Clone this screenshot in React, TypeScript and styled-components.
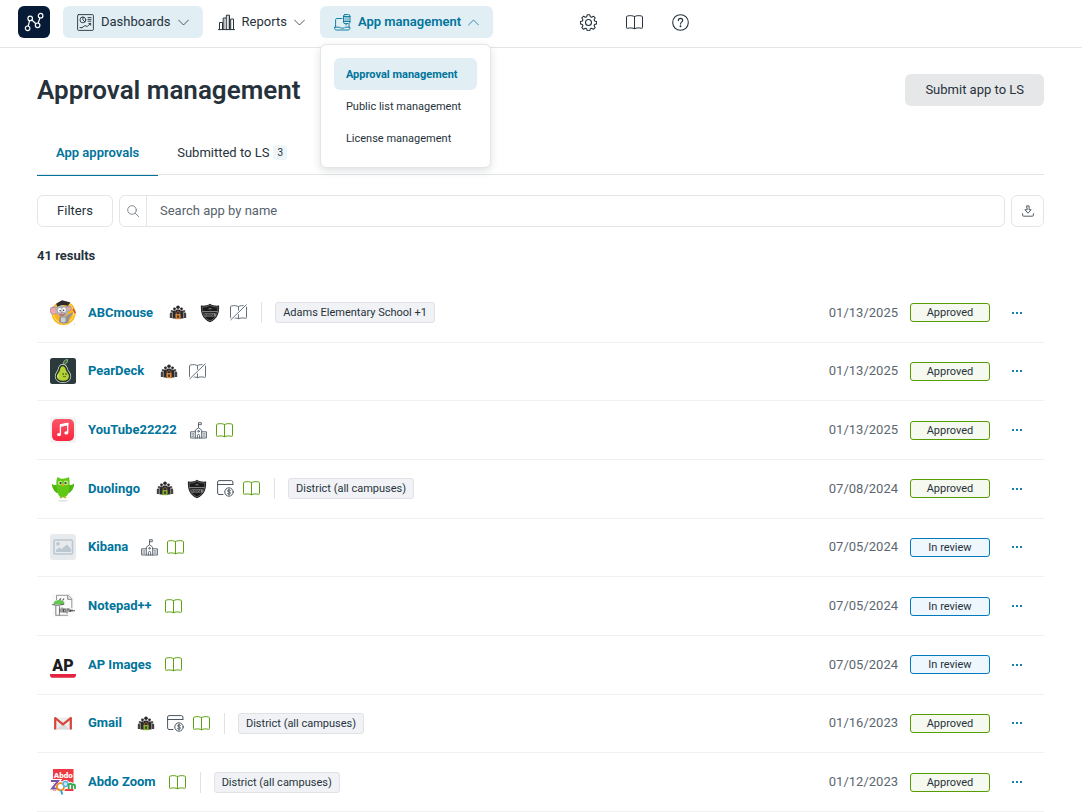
import React from 'react';
import styled, { createGlobalStyle, css } from 'styled-components';

const GlobalStyle = createGlobalStyle`
  *, *::before, *::after { box-sizing: border-box; }
  body {
    margin: 0;
    background: #fff;
    color: #26323b;
    font-family: Roboto, "Liberation Sans", sans-serif;
    font-size: 13px;
    line-height: 20px;
  }
  button, input { font: inherit; color: inherit; }
  svg { display: block; flex: none; }
`;

/* ---------- Header ---------- */

const Header = styled.header`
  display: flex;
  align-items: center;
  padding: 6px 18px 9px;
  border-bottom: 1px solid #e4e5e7;
`;

const HomeLink = styled.a`
  display: grid;
  place-items: center;
  width: 32px;
  height: 32px;
  margin-right: 13px;
  border-radius: 6px;
  background: #071b36;
`;

const Nav = styled.nav`
  display: flex;
  gap: 1px;
`;

const NavItem = styled.div`
  position: relative;
`;

const NavButton = styled.button<{ $filled?: boolean; $active?: boolean }>`
  display: flex;
  align-items: center;
  gap: 7px;
  height: 32px;
  padding: 0 14px;
  border: 0;
  border-radius: 6px;
  cursor: pointer;
  white-space: nowrap;
  background: ${(p) => (p.$filled ? '#e1eff5' : 'transparent')};
  color: ${(p) => (p.$active ? '#00749b' : '#26323b')};
  font-weight: ${(p) => (p.$active ? 600 : 400)};
`;

const Menu = styled.ul`
  position: absolute;
  top: 38px;
  left: 0;
  z-index: 2;
  min-width: 171px;
  margin: 0;
  padding: 13px;
  list-style: none;
  background: #fff;
  border: 1px solid #e4e5e7;
  border-radius: 6px;
  box-shadow: 0 3px 8px rgba(30, 40, 50, 0.14);
`;

const MenuLink = styled.a<{ $active?: boolean }>`
  display: block;
  padding: 7px 12px 5px;
  border-radius: 6px;
  font-size: 11px;
  text-decoration: none;
  white-space: nowrap;
  color: ${(p) => (p.$active ? '#00749b' : '#26323b')};
  background: ${(p) => (p.$active ? '#e1eff5' : 'transparent')};
  font-weight: ${(p) => (p.$active ? 700 : 400)};
`;

const Tools = styled.div`
  display: flex;
  gap: 29px;
  margin-left: 87px;
`;

const IconButton = styled.button`
  display: grid;
  place-items: center;
  padding: 0;
  border: 0;
  background: none;
  cursor: pointer;
`;

/* ---------- Page ---------- */

const Main = styled.main`
  padding: 26px 38px 0 37px;
`;

const TitleRow = styled.div`
  display: flex;
  align-items: center;
  justify-content: space-between;
`;

const Title = styled.h1`
  margin: 0;
  font-size: 26px;
  line-height: 32px;
  font-weight: 600;
`;

const SubmitButton = styled.button`
  height: 32px;
  padding: 0 20px;
  border: 0;
  border-radius: 6px;
  background: #e6e7e9;
  cursor: pointer;
`;

const Tabs = styled.div`
  display: flex;
  margin-top: 26px;
  border-bottom: 1px solid #e4e5e7;
`;

const Tab = styled.button<{ $active?: boolean }>`
  display: flex;
  align-items: center;
  gap: 4px;
  height: 44px;
  margin-bottom: -2px;
  padding: 0 19px 2px;
  border: 0;
  border-bottom: 1px solid ${(p) => (p.$active ? '#00749b' : 'transparent')};
  background: none;
  cursor: pointer;
  color: ${(p) => (p.$active ? '#00749b' : '#26323b')};
  font-weight: ${(p) => (p.$active ? 600 : 400)};
`;

const Count = styled.span`
  padding: 0 4px;
  border-radius: 3px;
  background: #edf5f8;
  font-size: 10px;
  line-height: 15px;
`;

const Toolbar = styled.div`
  display: flex;
  gap: 6px;
  margin-top: 20px;
`;

const outlined = css`
  height: 32px;
  border: 1px solid #e4e5e7;
  border-radius: 6px;
  background: #fff;
`;

const FilterButton = styled.button`
  ${outlined}
  width: 76px;
  cursor: pointer;
`;

const DownloadButton = styled.button`
  ${outlined}
  display: grid;
  place-items: center;
  width: 33px;
  padding: 0;
  cursor: pointer;
`;

const SearchBox = styled.label`
  ${outlined}
  display: flex;
  flex: 1;
  overflow: hidden;
`;

const SearchIconCell = styled.span`
  display: grid;
  place-items: center;
  width: 27px;
  border-right: 1px solid #e4e5e7;
`;

const SearchInput = styled.input`
  flex: 1;
  min-width: 0;
  padding: 0 13px;
  border: 0;
  outline: 0;
  background: none;
  &::placeholder { color: #56636e; opacity: 1; }
`;

const ResultCount = styled.h2`
  margin: 19px 0 18px;
  font-size: 13px;
  line-height: 20px;
  font-weight: 700;
`;

const AppList = styled.ul`
  display: grid;
  grid-auto-rows: 1fr;
  min-height: 528px;
  margin: 0;
  padding: 0;
  list-style: none;
`;

const AppRow = styled.li`
  display: flex;
  align-items: center;
  padding: 0 12px 0 13px;
  border-bottom: 1px solid #f1f1f2;
`;

const AppLink = styled.a`
  display: flex;
  align-items: center;
  gap: 12px;
  color: #00749b;
  font-weight: 700;
  text-decoration: none;
  white-space: nowrap;
`;

const Marks = styled.div`
  display: flex;
  align-items: center;
  gap: 9px;
  margin-left: 13px;
`;

const MarkSlot = styled.span<{ $wide?: boolean }>`
  display: grid;
  place-items: center;
  width: ${(p) => (p.$wide ? 23 : 17)}px;
`;

const Scope = styled.div`
  margin-left: 14px;
  padding-left: 13px;
  border-left: 1px solid #e0e2e4;
`;

const Tag = styled.span`
  display: block;
  padding: 0 7px;
  border: 1px solid #e0e2e6;
  border-radius: 3px;
  background: #f1f2f5;
  font-size: 11px;
  line-height: 19px;
  white-space: nowrap;
`;

const Meta = styled.div`
  display: flex;
  align-items: center;
  gap: 12px;
  margin-left: auto;
`;

const DateText = styled.time`
  color: #5b6670;
`;

const Status = styled.span<{ $review?: boolean }>`
  width: 80px;
  border: 1px solid ${(p) => (p.$review ? '#007abd' : '#559d00')};
  border-radius: 3px;
  background: ${(p) => (p.$review ? '#eef6fe' : '#f6f9f0')};
  font-size: 11px;
  line-height: 17px;
  text-align: center;
`;

const MoreButton = styled(IconButton)`
  width: 30px;
  height: 28px;
`;

/* ---------- Icons ---------- */

const line = {
  fill: 'none',
  stroke: 'currentColor',
  strokeLinecap: 'round' as const,
  strokeLinejoin: 'round' as const,
};

const NetworkIcon = () => (
  <svg width="22" height="22" viewBox="0 0 22 22" {...line} stroke="#fff" strokeWidth="1.2">
    <circle cx="4.6" cy="17.3" r="2.3" />
    <circle cx="7.2" cy="7.4" r="2.3" />
    <circle cx="14.6" cy="14.3" r="2.3" />
    <circle cx="17.6" cy="4.7" r="2.3" />
    <path d="M5.2 15 6.6 9.7M8.9 9l4 3.7M15.2 12l1.7-5" />
  </svg>
);

const Chevron = ({ up }: { up?: boolean }) => (
  <svg width="11" height="11" viewBox="0 0 11 11" {...line} strokeWidth="0.8">
    <path d={up ? 'M.5 8 5.5 3l5 5' : 'M.5 3l5 5 5-5'} />
  </svg>
);

const DashboardIcon = () => (
  <svg width="17" height="17" viewBox="0 0 17 17" {...line} strokeWidth="0.9">
    <rect x=".6" y=".6" width="15.8" height="15.8" rx="1" />
    <circle cx="5.9" cy="5.9" r="2.9" />
    <path d="M5.9 3v2.900l2 2M11 3.600h3M11 5.400h3M11 7.200h3M5 13.600l3-2 2.200.9 3.400-3M11.800 9.400h1.900v1.800M3 13.600h2" />
  </svg>
);

const ReportsIcon = () => (
  <svg width="17" height="17" viewBox="0 0 17 17" {...line} strokeWidth="1">
    <path d="M.5 15.600h16M1.500 15.300V8.500h3v6.800M5.200 15.300V4h2.600M8.300 15.300V1.200h3.200v14.100M12.700 15.300V5h2.800v10.300" />
    <path d="M10.200 2v13M6.700 5v10" strokeWidth=".4" />
  </svg>
);

const AppsIcon = () => (
  <svg width="17" height="17" viewBox="0 0 17 17" {...line} strokeWidth=".9">
    <path d="M8 4.500H2.800c-.7 0-1.200.5-1.200 1.200v7.300M15 10.500V13M.5 13.200h5.300l.8.9h3.600l.9-.9h4.800v1c0 1-.8 1.800-1.800 1.800H2.400c-1 0-1.900-.8-1.900-1.800z" />
    <rect x="9.500" y=".6" width="6.500" height="9" rx="1.500" />
    <path d="M9.500 2.500H16M9.500 7.500H16M12 9.800v1.200" />
    <rect x="10.200" y="3" width="5.200" height="4.200" fill="currentColor" fillOpacity=".35" stroke="none" />
  </svg>
);

const GearIcon = () => (
  <svg width="17" height="17" viewBox="0 0 17 17" {...line} strokeWidth="1.1">
    <circle cx="8.500" cy="8.500" r="3" />
    <path d="M7.300.7h2.400l.6 2 1.300.5 1.800-1 1.700 1.700-1 1.800.5 1.300 2 .5v2.400l-2 .6-.5 1.300 1 1.800-1.700 1.700-1.800-1-1.300.5-.6 2H7.300l-.6-2-1.300-.5-1.800 1-1.700-1.700 1-1.800-.5-1.300-2-.6V7.500l2-.5.500-1.300-1-1.800 1.700-1.700 1.800 1 1.300-.5z" />
  </svg>
);

const BookIcon = ({ color, off }: { color?: string; off?: boolean }) => (
  <svg width="17" height="17" viewBox="0 0 17 17" {...line} stroke={color || 'currentColor'} strokeWidth="1">
    <path d="M8.500 2.600C7 1.500 3.800 1.300 1.200 2.100c-.4.100-.7.400-.7.800v10.700c0 .6.400.8.900.7 2.400-.6 5.400-.5 7.100.400 1.700-.9 4.700-1 7.100-.4.500.100.900-.1.900-.7V2.900c0-.4-.3-.7-.7-.8-2.600-.8-5.800-.6-7.300.500z" />
    {off ? (
      <>
        <path d="M8.500 2.600v3.900M8.500 10.500v4.200" />
        <path d="M1 15.700 16.300.9" stroke="#fff" strokeWidth="2.600" />
        <path d="M.8 15.800 16.300.8" />
      </>
    ) : (
      <path d="M8.500 2.600v12.100" />
    )}
  </svg>
);

const HelpIcon = () => (
  <svg width="17" height="17" viewBox="0 0 17 17" {...line} strokeWidth="1.1">
    <circle cx="8.500" cy="8.500" r="7.800" />
    <path d="M6.300 6.600c0-1.300 1-2.200 2.200-2.200s2.200.9 2.200 2.100c0 1.700-2.200 1.700-2.200 3.600" />
    <circle cx="8.500" cy="12.300" r=".4" fill="currentColor" />
  </svg>
);

const SearchIcon = () => (
  <svg width="12" height="12" viewBox="0 0 12 12" {...line} stroke="#66717b" strokeWidth=".8">
    <circle cx="5" cy="5" r="4.300" />
    <path d="m8.200 8.200 3.400 3.400" />
  </svg>
);

const DownloadIcon = () => (
  <svg width="12" height="12" viewBox="0 0 12 12" {...line} stroke="#3f4b55" strokeWidth=".9">
    <path d="M.6 8.600v1.600c0 .6.400 1 1 1h8.800c.6 0 1-.4 1-1V8.600M4.900.900h2.200v3.800h2L6 8.200 2.900 4.700h2z" />
  </svg>
);

const MoreIcon = () => (
  <svg width="12" height="4" viewBox="0 0 12 4" fill="#1583a8">
    <rect x="1" y="1" width="2" height="2" />
    <rect x="5" y="1" width="2" height="2" />
    <rect x="9" y="1" width="2" height="2" />
  </svg>
);

const SchoolIcon = () => (
  <svg width="17" height="17" viewBox="0 0 17 17" {...line} stroke="#4d5964" strokeWidth=".9">
    <path d="M8.500 5.500V.7h2.800v2H8.500M5.300 16V8.200l3.200-2.500 3.200 2.500V16M5.300 9.800H.6V16h15.800V9.800h-4.700" />
    <path d="M7.400 16v-2.600c0-1.300 2.200-1.300 2.200 0V16" />
    <circle cx="8.500" cy="9.300" r=".8" />
    <path d="M2.200 11.600v.6M3.700 11.600v.6M2.200 13.800v.6M3.700 13.800v.6M13.200 11.600v.6M14.800 11.600v.6M13.200 13.800v.6M14.800 13.800v.6" />
  </svg>
);

const PaidIcon = () => (
  <svg width="17" height="17" viewBox="0 0 17 17" {...line} stroke="#4a5661" strokeWidth="1">
    <path d="M6 14.500H2c-.8 0-1.400-.6-1.400-1.400V2c0-.8.6-1.400 1.400-1.400h12.500c.8 0 1.400.6 1.400 1.400v2.500M.6 4.500h15.300" />
    <circle cx="12" cy="12" r="4.200" />
    <path d="M13.500 10.600c-.3-.6-.9-.7-1.500-.7-.8 0-1.400.4-1.400 1 0 1.400 2.900.7 2.900 2.200 0 .7-.7 1-1.500 1-.7 0-1.300-.2-1.600-.8M12 9.100v5.800" />
  </svg>
);

const CommunityIcon = ({ lock }: { lock: string }) => (
  <svg width="18" height="17" viewBox="0 0 18 17" fill="#2a2a2a">
    <circle cx="9" cy="3.300" r="1.800" />
    <circle cx="5.500" cy="4.800" r="1.400" />
    <circle cx="12.500" cy="4.800" r="1.400" />
    <circle cx="2.900" cy="7.100" r="1.200" fill="#555" />
    <circle cx="15.100" cy="7.100" r="1.200" fill="#555" />
    <path d="M.8 14V10c0-1 .7-1.400 1.800-1.400h.6V14zM17.200 14V10c0-1-.7-1.400-1.800-1.400h-.6V14z" fill="#444" />
    <path d="M3.500 14.600V8.200c0-1.100.7-1.600 1.800-1.600h.9v8zM14.500 14.600V8.200c0-1.100-.7-1.600-1.800-1.600h-.9v8zM6.300 15V7c0-1 1-1.500 2.700-1.500s2.700.5 2.700 1.500v8z" />
    <path d="M7.500 10V8.900c0-1.900 3-1.900 3 0V10" fill="none" stroke="#9a5a3c" strokeWidth=".9" />
    <rect x="6.500" y="10" width="5" height="5.200" fill={lock} />
    <rect x="8.200" y="11.400" width="1.600" height="2.500" fill="#2a2a2a" />
  </svg>
);

const ShieldIcon = () => (
  <svg width="20" height="20" viewBox="0 0 20 20">
    <path d="M10 .8C7.500 2.600 4 3 .9 2.600c-.3 7.800 1.500 13.500 9.100 16.700 7.600-3.200 9.400-8.900 9.100-16.700C16 3 12.500 2.600 10 .8z" fill="#1a1a1a" />
    <path d="M10 2.200C7.500 3.700 4.800 4.100 2.200 3.900c0 6.300 1.600 11.300 7.800 14 6.200-2.700 7.800-7.700 7.800-14-2.600.2-5.300-.2-7.800-1.700z" fill="none" stroke="#9a9a9a" strokeWidth=".5" />
    <path d="M2.500 8.600h15" stroke="#999" strokeWidth=".9" />
    <rect x="4.200" y="10.300" width="11.600" height="3.200" rx=".5" fill="#8f8f8f" />
    <path d="M5 13V10.800l1.500 1.500L8 10.800V13M9.200 13v-2.200M10.800 13v-2.200l2.600 2.200v-2.200" fill="none" stroke="#1a1a1a" strokeWidth=".8" />
    <path d="M7.500 6.300 10 4.800l2.500 1.500z" fill="#777" />
  </svg>
);

/* ---------- App logos ---------- */

const Logo = ({ children }: { children: React.ReactNode }) => (
  <svg width="26" height="26" viewBox="0 0 26 26" aria-hidden="true">
    {children}
  </svg>
);

const MouseLogo = () => (
  <Logo>
    <circle cx="13.500" cy="13" r="12" fill="#fdb515" />
    <circle cx="13.500" cy="13" r="10.200" fill="none" stroke="#ffe07a" strokeWidth="1" />
    <circle cx="3.900" cy="10.500" r="4" fill="#9b9a9c" />
    <circle cx="3.700" cy="10.800" r="3.100" fill="#f5a3ad" />
    <circle cx="18.500" cy="8.500" r="3" fill="#9b9a9c" />
    <circle cx="18.800" cy="8.700" r="2" fill="#f5a3ad" />
    <path d="M6 7.500c3-3.200 9-3 11.200 1 1.600 3.200.8 6.700-2.300 8l-3 .3C7.800 16.500 4 12 6 7.500z" fill="#b0afb2" />
    <path d="M9.500 16.500h6.500l3-2.500 4.500-2-4 6-1 4.500c-3 1.500-7 1.300-9.500-.5z" fill="#929195" />
    <path d="M11 17.500h4.500v4.300c-1.600.5-3.200.4-4.500 0z" fill="#cfced1" />
    <path d="M6.200 3.800 12 .3l8.400 2.200-2.600 3.300c-3.600-1.300-7.400-1-10.600.9z" fill="#2c2b30" />
    <ellipse cx="9.800" cy="10.200" rx="1.800" ry="2.200" fill="#fff" />
    <ellipse cx="14" cy="9.700" rx="1.800" ry="2.200" fill="#fff" />
    <circle cx="10.200" cy="10.700" r=".8" fill="#333" />
    <circle cx="13.600" cy="10.300" r=".8" fill="#333" />
    <path d="M9.500 14.500c1.600 1.200 4.200 1 5.600-.7" fill="none" stroke="#c13a3a" strokeWidth=".9" />
    <circle cx="11.800" cy="13" r=".9" fill="#e87a86" />
    <path d="m23 9 2.500 4" stroke="#c54b2f" strokeWidth="1.500" />
    <circle cx="24.500" cy="24" r=".5" fill="#aaa" />
  </Logo>
);

const PearLogo = () => (
  <Logo>
    <rect width="26" height="26" rx="2.500" fill="#2b3a3d" />
    <path d="M12.700 7.500c-2.500 0-3.200 2.300-3.500 4.300-.3 2-2.900 3.300-2.900 6.500 0 3.300 2.900 5.200 6.700 5.200s6.700-1.900 6.700-5.200c0-3.200-2.600-4.500-3.100-6.500-.5-2-1.200-4.300-3.900-4.300z" fill="none" stroke="#dfe6d6" strokeWidth="3" />
    <path d="M12.700 7.500c-2.500 0-3.200 2.300-3.500 4.300-.3 2-2.900 3.300-2.900 6.500 0 3.300 2.900 5.200 6.700 5.200s6.700-1.900 6.700-5.200c0-3.200-2.600-4.500-3.100-6.500-.5-2-1.200-4.300-3.900-4.300z" fill="#b4d334" stroke="#26352a" strokeWidth="1.600" />
    <path d="M8.600 16c-.9 1.200-1 2.800-.5 4" stroke="#d5e878" strokeWidth="1.200" fill="none" />
    <path d="M13.500 6.500c-.8-2.500 1-4.800 4-5 .3 2.700-1.200 4.700-4 5z" fill="#3f6b2e" stroke="#dfe6d6" strokeWidth=".6" />
    <circle cx="13.200" cy="16" r=".8" fill="#26352a" />
    <circle cx="16" cy="16" r=".8" fill="#26352a" />
    <path d="M13 18c.8 1 2.300 1 3.100 0" stroke="#26352a" strokeWidth=".8" fill="none" />
  </Logo>
);

const MusicLogo = () => (
  <Logo>
    <defs>
      <linearGradient id="music" x1="0" y1="0" x2="0" y2="1">
        <stop offset="0" stopColor="#fb5668" />
        <stop offset="1" stopColor="#f9253f" />
      </linearGradient>
    </defs>
    <rect width="26" height="26" rx="2" fill="#f3f3f4" />
    <rect x="2" y="2" width="22" height="22" rx="5" fill="url(#music)" />
    <path d="M10.400 17.300V8.200l7.300-1.500v8.800" fill="none" stroke="#fff" strokeWidth="1.300" />
    <path d="M10 7.300 18.300 5.500v2.700L10 10z" fill="#fff" />
    <ellipse cx="9" cy="17.600" rx="2" ry="1.600" fill="#fff" />
    <ellipse cx="16.300" cy="15.900" rx="2" ry="1.600" fill="#fff" />
  </Logo>
);

const OwlLogo = () => (
  <Logo>
    <ellipse cx="13" cy="24.700" rx="5.500" ry=".7" fill="#ddd" />
    <path d="M7.500 1c1.800 1.300 3.600 1.800 5.500 1.800s4-.5 6-1.700c.5 2.400.7 5.200.6 7.900 1.900.2 3.300-.4 4.400-1.500-.1 4.500-2.300 8-5.500 9.600-1.200 2.900-3 4.400-5.500 4.400s-4.300-1.500-5.400-4.500C4.500 15.700 2.300 12.300 2 8c1.200 1.100 2.700 1.500 4.400 1.300C6.200 6.500 6.400 3.500 7.500 1z" fill="#5fc916" />
    <path d="M2 8c.3 4.300 2.500 7.700 5.600 9L6.400 9.300C4.700 9.500 3.200 9.100 2 8zM24 7.500c-.1 4.500-2.300 8-5.500 9.600L19.600 9c1.900.2 3.300-.4 4.400-1.500z" fill="#4fb50f" />
    <ellipse cx="10.200" cy="7" rx="2.400" ry="2.300" fill="#b9ec78" />
    <ellipse cx="15.900" cy="6.900" rx="2.400" ry="2.300" fill="#b9ec78" />
    <circle cx="10.600" cy="7.100" r="1.100" fill="#3c3c3c" />
    <circle cx="15.500" cy="7" r="1.100" fill="#3c3c3c" />
    <path d="M11.500 8.200h3.300l-1.600 2.800z" fill="#f6a31c" />
    <path d="M9.800 21h2v1.300h-2zM14.300 21h2v1.300h-2z" fill="#c9a31c" />
  </Logo>
);

const PlaceholderLogo = () => (
  <Logo>
    <rect width="26" height="26" rx="3" fill="#e7ebee" />
    <rect x="4" y="6" width="18.500" height="14" rx="1" fill="none" stroke="#bdc7cf" strokeWidth="1.600" />
    <circle cx="8" cy="9.800" r="1.900" fill="#bdc7cf" />
    <path d="M6 18v-2l3-2.500 2.500 1.500 5.500-4.500 4 4.500v3z" fill="#bdc7cf" />
  </Logo>
);

const NotepadLogo = () => (
  <Logo>
    <rect x="2" y="1" width="22" height="23" fill="#fafafa" />
    <path d="M6.500 7V2.300h12l3.300 3.500v9.500M9 22.300h9" fill="none" stroke="#999" strokeWidth="1" />
    <path d="M17.700 2.500v3.800h4" fill="#eee" stroke="#777" strokeWidth=".9" />
    <path d="M3.500 10.300c1-4 9.500-4.500 11-.5l-.5 1.500H4z" fill="#63c552" />
    <path d="M2.200 11.500c4 1 8 1 12-.4M9.500 7l1.500-1.600M12.500 7.500 14 5.600" stroke="#56604f" strokeWidth="1.100" fill="none" />
    <path d="M5.800 13v9.300h3.700V13" stroke="#8a8a8a" strokeWidth="1.100" fill="none" />
    <path d="M10 15.500v4M12 14.500v5M13.500 16h1.700v3h-1.700zM17 15.500v5M17 16h2v3M20.500 16.500v2.500M22 16.500v2M19.500 17.700h5.500" stroke="#555" strokeWidth="1.100" fill="none" />
  </Logo>
);

const PressLogo = () => (
  <Logo>
    <text x="13" y="18.500" textAnchor="middle" fontFamily="Roboto, sans-serif" fontWeight="900" fontSize="16" fill="#1d1d1f">
      AP
    </text>
    <path d="M0 22h26v1c0 1.500-.9 2.700-2.200 2.700H2.200C.9 25.700 0 24.500 0 23z" fill="#e4233f" />
  </Logo>
);

const MailLogo = () => (
  <Logo>
    <path d="M4 7.500h18v12H4z" fill="#ededed" />
    <path d="m6.500 19.500 6.500-6.500 6.500 6.500z" fill="#dcdcdc" />
    <path d="M5.200 19.500V8l7.800 6.300L20.800 8v11.500" fill="none" stroke="#d5453a" strokeWidth="2.200" strokeLinejoin="round" />
  </Logo>
);

const AbdoLogo = () => (
  <Logo>
    <rect x="3" width="20.500" height="22" fill="#ee3b43" />
    <text x="13.200" y="8.500" textAnchor="middle" fontFamily="Roboto, sans-serif" fontWeight="900" fontSize="8" fill="#fff">
      Abdo
    </text>
    <path d="M1 12h7L2.200 19.500H7.500" fill="none" stroke="#fff" strokeWidth="4.200" />
    <circle cx="10.300" cy="17.700" r="4" fill="#fff" stroke="#fff" strokeWidth="3.500" />
    <circle cx="15.500" cy="15.500" r="3" fill="#fff" stroke="#fff" strokeWidth="3" />
    <path d="M18.700 20v-4.500c2-1.500 3.300-.5 3.300 1V20m0-3.500c1-1.500 3-1.300 3 .5V20" fill="none" stroke="#fff" strokeWidth="3.800" />
    <path d="M1 12h7L2.200 19.500H7.500" fill="none" stroke="#7b4fa5" strokeWidth="2" />
    <circle cx="10.500" cy="17.700" r="3.600" fill="#fff" stroke="#f08a24" strokeWidth="1.900" />
    <circle cx="15.500" cy="15" r="2.400" fill="#cfe9f7" stroke="#58b7e6" strokeWidth="1.500" />
    <path d="M18.700 20v-4.500c2-1.500 3.300-.5 3.300 1V20m0-3.500c1-1.500 3-1.300 3 .5V20" fill="none" stroke="#35a84c" strokeWidth="1.800" />
    <path d="m11 21.500 1.300 4" stroke="#1da1e0" strokeWidth="1.800" />
  </Logo>
);

/* ---------- Data ---------- */

type Mark = 'community' | 'communityGreen' | 'shield' | 'paid' | 'school' | 'book' | 'bookOff';

type AppEntry = {
  name: string;
  logo: React.ReactNode;
  marks: Mark[];
  scope?: string;
  date: string;
  status: 'Approved' | 'In review';
};

const apps: AppEntry[] = [
  { name: 'ABCmouse', logo: <MouseLogo />, marks: ['community', 'shield', 'bookOff'], scope: 'Adams Elementary School +1', date: '01/13/2025', status: 'Approved' },
  { name: 'PearDeck', logo: <PearLogo />, marks: ['community', 'bookOff'], date: '01/13/2025', status: 'Approved' },
  { name: 'YouTube22222', logo: <MusicLogo />, marks: ['school', 'book'], date: '01/13/2025', status: 'Approved' },
  { name: 'Duolingo', logo: <OwlLogo />, marks: ['communityGreen', 'shield', 'paid', 'book'], scope: 'District (all campuses)', date: '07/08/2024', status: 'Approved' },
  { name: 'Kibana', logo: <PlaceholderLogo />, marks: ['school', 'book'], date: '07/05/2024', status: 'In review' },
  { name: 'Notepad++', logo: <NotepadLogo />, marks: ['book'], date: '07/05/2024', status: 'In review' },
  { name: 'AP Images', logo: <PressLogo />, marks: ['book'], date: '07/05/2024', status: 'In review' },
  { name: 'Gmail', logo: <MailLogo />, marks: ['communityGreen', 'paid', 'book'], scope: 'District (all campuses)', date: '01/16/2023', status: 'Approved' },
  { name: 'Abdo Zoom', logo: <AbdoLogo />, marks: ['book'], scope: 'District (all campuses)', date: '01/12/2023', status: 'Approved' },
];

const markIcons: Record<Mark, React.ReactNode> = {
  community: <CommunityIcon lock="#d98436" />,
  communityGreen: <CommunityIcon lock="#86b32d" />,
  shield: <ShieldIcon />,
  paid: <PaidIcon />,
  school: <SchoolIcon />,
  book: <BookIcon color="#5da10f" />,
  bookOff: <BookIcon color="#66717c" off />,
};

const isWide = (mark: Mark) => mark === 'shield' || mark.startsWith('community');

export default function App() {
  return (
    <>
      <GlobalStyle />
      <Header>
        <HomeLink href="#" aria-label="Home">
          <NetworkIcon />
        </HomeLink>
        <Nav>
          <NavButton $filled>
            <DashboardIcon />
            Dashboards
            <Chevron />
          </NavButton>
          <NavButton>
            <ReportsIcon />
            Reports
            <Chevron />
          </NavButton>
          <NavItem>
            <NavButton $filled $active aria-expanded="true">
              <AppsIcon />
              App management
              <Chevron up />
            </NavButton>
            <Menu>
              <li><MenuLink href="#" $active>Approval management</MenuLink></li>
              <li><MenuLink href="#">Public list management</MenuLink></li>
              <li><MenuLink href="#">License management</MenuLink></li>
            </Menu>
          </NavItem>
        </Nav>
        <Tools>
          <IconButton aria-label="Settings"><GearIcon /></IconButton>
          <IconButton aria-label="Library"><BookIcon /></IconButton>
          <IconButton aria-label="Help"><HelpIcon /></IconButton>
        </Tools>
      </Header>

      <Main>
        <TitleRow>
          <Title>Approval management</Title>
          <SubmitButton>Submit app to LS</SubmitButton>
        </TitleRow>

        <Tabs role="tablist">
          <Tab role="tab" aria-selected="true" $active>App approvals</Tab>
          <Tab role="tab" aria-selected="false">
            Submitted to LS <Count>3</Count>
          </Tab>
        </Tabs>

        <Toolbar>
          <FilterButton>Filters</FilterButton>
          <SearchBox>
            <SearchIconCell><SearchIcon /></SearchIconCell>
            <SearchInput type="text" aria-label="Search app by name" placeholder="Search app by name" />
          </SearchBox>
          <DownloadButton aria-label="Download"><DownloadIcon /></DownloadButton>
        </Toolbar>

        <ResultCount>41 results</ResultCount>

        <AppList>
          {apps.map((app) => (
            <AppRow key={app.name}>
              <AppLink href="#">
                {app.logo}
                {app.name}
              </AppLink>
              <Marks>
                {app.marks.map((mark) => (
                  <MarkSlot key={mark} $wide={isWide(mark)}>{markIcons[mark]}</MarkSlot>
                ))}
              </Marks>
              {app.scope && (
                <Scope>
                  <Tag>{app.scope}</Tag>
                </Scope>
              )}
              <Meta>
                <DateText>{app.date}</DateText>
                <Status $review={app.status === 'In review'}>{app.status}</Status>
                <MoreButton aria-label={`More actions for ${app.name}`}><MoreIcon /></MoreButton>
              </Meta>
            </AppRow>
          ))}
        </AppList>
      </Main>
    </>
  );
}
